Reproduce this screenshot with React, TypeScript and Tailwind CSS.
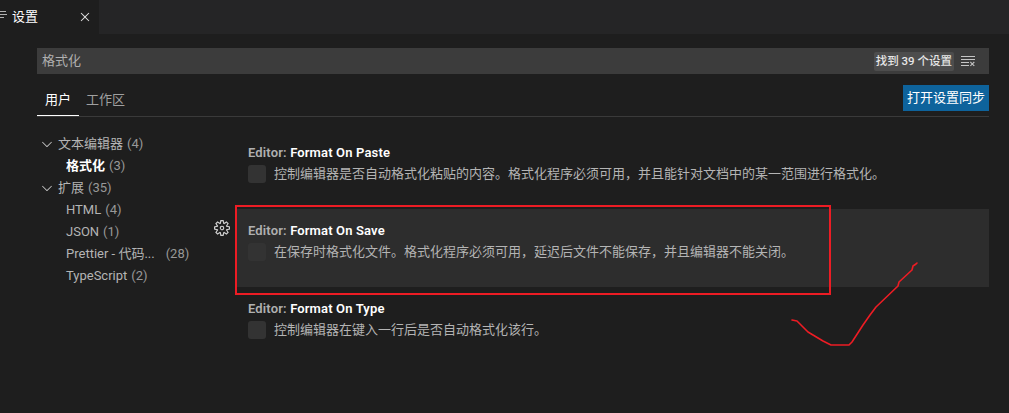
import { VscChevronDown, VscClearAll, VscClose, VscSettingsGear } from "react-icons/vsc";

const font = "font-['Roboto','Noto_Sans_CJK_SC',sans-serif]";

const tree = [
  { label: "文本编辑器", count: "(4)", open: true },
  { label: "格式化", count: "(3)", active: true },
  { label: "扩展", count: "(35)", open: true },
  { label: "HTML", count: "(4)" },
  { label: "JSON", count: "(1)" },
  { label: "Prettier - 代码...", count: "(28)", wide: true },
  { label: "TypeScript", count: "(2)" },
];

const settings = [
  { name: "Format On Paste", desc: "控制编辑器是否自动格式化粘贴的内容。格式化程序必须可用，并且能针对文档中的某一范围进行格式化。" },
  { name: "Format On Save", desc: "在保存时格式化文件。格式化程序必须可用，延迟后文件不能保存，并且编辑器不能关闭。", focused: true },
  { name: "Format On Type", desc: "控制编辑器在键入一行后是否自动格式化该行。" },
];

function TreeRow({ item }: { item: (typeof tree)[number] }) {
  return (
    <div className="flex h-[22px] items-center text-[13px] text-[#a8a8a8]">
      {item.open ? (
        <VscChevronDown size={16} className="ml-[39px] mr-[3px] text-[#c5c5c5]" />
      ) : (
        <span className="w-[66px]" />
      )}
      <span className={item.active ? "font-bold text-white" : "text-[#b4b4b4]"}>{item.label}</span>
      <span className={item.wide ? "ml-[11px] text-[#989898]" : "ml-[4px] text-[#989898]"}>{item.count}</span>
    </div>
  );
}

function SettingRow({ item }: { item: (typeof settings)[number] }) {
  return (
    <div className={`relative h-[78px] pl-[12px] pt-[13px] ${item.focused ? "bg-[#2d2d2d]" : ""}`}>
      {item.focused && (
        <VscSettingsGear size={16} className="absolute left-[-22px] top-[11px] text-[#d0d0d0]" />
      )}
      <div className="h-[18px] text-[13px] leading-[18px] font-semibold tracking-[0.15px] text-white">
        <span className="text-[#b0b0b0]">Editor: </span>
        {item.name}
      </div>
      <div className="mt-[2px] flex items-center">
        <span className="h-[18px] w-[18px] rounded-[3px] bg-[#333333]" />
        <span className="ml-[8px] text-[13px] leading-[19px] text-[#b4b4b4]">{item.desc}</span>
      </div>
    </div>
  );
}

export default function App() {
  return (
    <div className={`relative h-[413px] w-[1009px] overflow-hidden bg-[#1e1e1e] ${font}`}>
      {/* tab bar */}
      <div className="flex h-[34px] bg-[#252526]">
        <div className="flex w-[99px] items-center bg-[#1e1e1e] pl-[12px] text-[13px] text-white">
          <span>设置</span>
          <VscClose size={16} className="ml-[39px] text-[#e0e0e0]" />
        </div>
      </div>

      {/* hamburger sliver on the tab */}
      <svg className="absolute left-0 top-[10px]" width="8" height="12" viewBox="0 0 8 12">
        <path d="M0 1.5h6M0 4.5h7M0 7.5h4" stroke="#b0b0b0" strokeWidth="1.2" fill="none" />
      </svg>

      <div className="pl-[37px] pr-[20px] pt-[14px]">
        {/* search */}
        <div className="flex h-[26px] items-center bg-[#3c3c3c] pl-[5px] pr-[8px]">
          <span className="text-[13px] text-[#b0b0b0]">格式化</span>
          <span className="ml-auto rounded-[2px] bg-[#4d4d4d] px-[2px] text-[11.5px] leading-[19px] font-medium text-[#e6e6e6]">
            找到 39 个设置
          </span>
          <VscClearAll size={16} className="ml-[6px] mr-[5px] text-[#c5c5c5]" />
        </div>

        {/* scope tabs */}
        <div className="mt-[10px] flex h-[33px] items-center justify-between border-b border-[#3a3a3a]">
          <div className="flex h-full">
            <div className="flex w-[42px] items-center justify-center border-b-[1px] border-white text-[13px] text-white">
              用户
            </div>
            <div className="ml-[7px] flex items-center text-[13px] text-[#a0a0a0]">工作区</div>
          </div>
          <div className="mb-[5px] flex h-[26px] items-center bg-[#0e639c] px-[4px] text-[13px] text-white">
            打开设置同步
          </div>
        </div>
      </div>

      {/* body */}
      <div className="mt-[14px] flex pr-[20px]">
        <div className="w-[236px] pt-[2px]">
          {tree.map((item) => (
            <TreeRow key={item.label} item={item} />
          ))}
        </div>
        <div className="flex-1">
          {settings.map((item) => (
            <SettingRow key={item.name} item={item} />
          ))}
        </div>
      </div>

      {/* red annotations drawn on top of the screenshot */}
      <div className="absolute left-[235px] top-[205px] h-[90px] w-[596px] border-2 border-[#ed1c24]" />
      <svg className="absolute left-0 top-0" width="1009" height="413" viewBox="0 0 1009 413" fill="none">
        <path
          d="M792 320L797 321L808 332L813 335L823 341L831 345L849 345L852 342L863 325L870 315L876 307L898 286L899 282L912 270L913 266L916 264L917 263"
          stroke="#ed1c24"
          strokeWidth="1.6"
          strokeLinejoin="round"
          strokeLinecap="round"
        />
      </svg>
    </div>
  );
}
